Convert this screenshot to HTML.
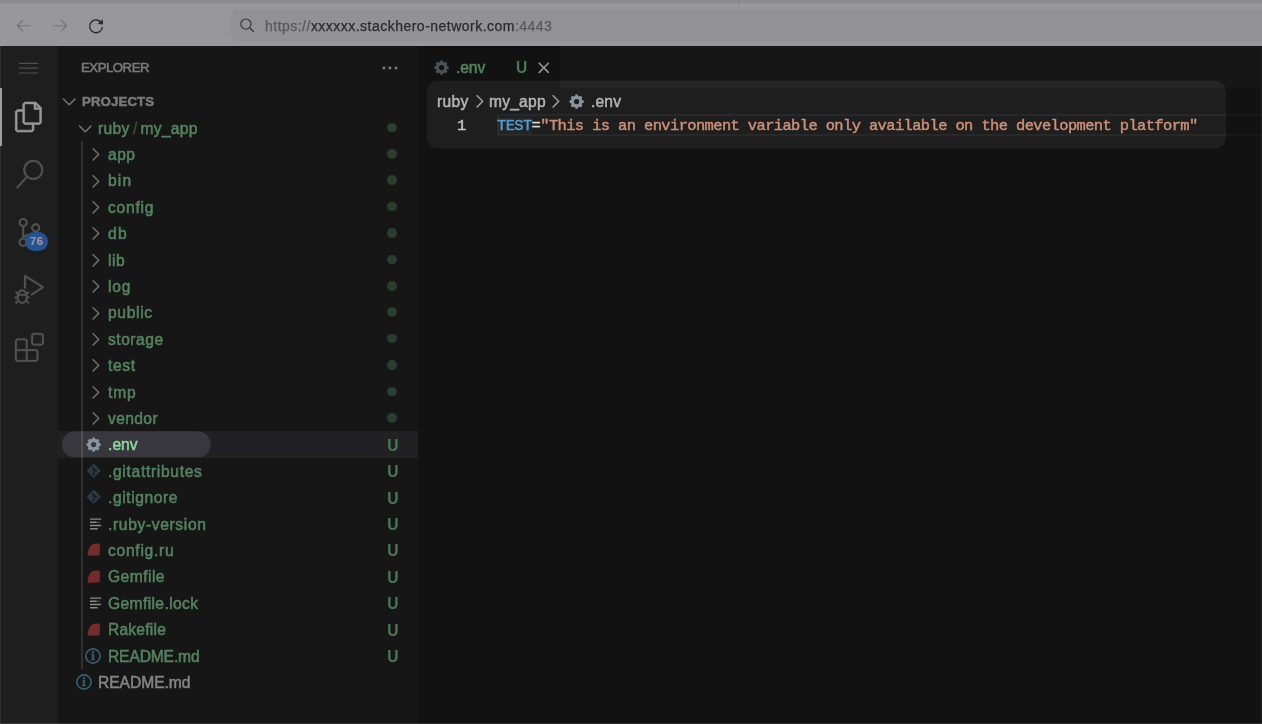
<!DOCTYPE html>
<html lang="en"><head><meta charset="utf-8"><title>.env - Visual Studio Code</title>
<style>
html,body{margin:0;padding:0;background:#121212;}
body{width:1262px;height:724px;overflow:hidden;position:relative;font-family:"Liberation Sans",sans-serif;}
.ic{position:absolute;display:block;overflow:visible}
.t,.u,.mono,#urltxt{will-change:transform;}
#chrome{position:absolute;left:0;top:0;width:1262px;height:46px;background:#98989a;}
#chrome .strip{position:absolute;left:0;top:0;width:1262px;height:4px;background:linear-gradient(#8b8b8e,#929295);border-bottom:1px solid #9c9c9e;}
#chrome .tick{position:absolute;left:738px;top:0;width:1px;height:4px;background:#7e7e82;}
#url{position:absolute;left:231px;top:9px;width:1045px;height:32px;border-radius:7px;background:#929294;}
#urltxt{position:absolute;left:264.8px;top:16.5px;font-size:14px;line-height:19px;white-space:nowrap;color:#59595b;-webkit-text-stroke:0.25px currentColor;}
#urltxt b{font-weight:normal;color:#2a2a2c;}
#vs{position:absolute;left:0;top:46px;width:1262px;height:678px;background:#1e1e1e;overflow:hidden;}
#act{position:absolute;left:0;top:0;width:57.6px;height:678px;background:#333333;}
#act .ind{position:absolute;left:0;top:42px;width:2.4px;height:57.6px;background:#ffffff;}
#side{position:absolute;left:57.6px;top:0;width:360px;height:678px;background:#252526;}
#tabs{position:absolute;left:417.6px;top:0;width:845px;height:42px;background:#252526;}
#tab{position:absolute;left:0;top:0;width:142.6px;height:42px;background:#1e1e1e;}
.t{position:absolute;white-space:nowrap;font-size:15.6px;line-height:26.4px;height:26.4px;margin-top:1.2px;-webkit-text-stroke:0.5px currentColor;}
.g{color:#8cd9a0;}
.row{position:absolute;left:0;width:360px;height:26.4px;}
.sel{background:#37373d;}
.dot{position:absolute;left:329.7px;top:8.3px;width:9.6px;height:9.6px;border-radius:50%;background:#7cc98a;opacity:.4;}
.u{position:absolute;left:322.6px;width:26px;text-align:center;top:1.6px;font-size:15.6px;font-weight:bold;line-height:26.4px;color:#78c990;}
.guide{position:absolute;left:23.5px;top:94.8px;width:1.9px;height:528px;background:#505050;}
#crumbs{position:absolute;left:417.6px;top:42px;width:845px;height:26.4px;background:#1e1e1e;color:rgba(204,204,204,.8);}
#code{position:absolute;left:417.6px;top:68.4px;width:845px;height:610px;}
.hl{position:absolute;left:79.4px;top:0;width:770px;height:17.6px;border:2px solid #282828;}
.mono{font-family:"Liberation Mono",monospace;font-size:15.4px;line-height:21.6px;letter-spacing:-0.586px;position:absolute;white-space:pre;top:1.5px;height:21.6px;-webkit-text-stroke:0.45px currentColor;}
#dim{position:absolute;left:0;top:0;}
</style></head><body>

<div id="chrome"><div class="strip"></div><div class="tick"></div><div id="url"></div>
<svg class="ic" style="left:14px;top:16px" width="20" height="20" viewBox="0 0 20 20"><path d="M16.8 9.7H3.6M9 4 3.4 9.7 9 15.4" fill="none" stroke="#737377" stroke-width="1.15"/></svg>
<svg class="ic" style="left:50px;top:16px" width="20" height="20" viewBox="0 0 20 20"><path d="M3.2 9.7H16.4M11 4 16.6 9.7 11 15.4" fill="none" stroke="#737377" stroke-width="1.15"/></svg>
<svg class="ic" style="left:86px;top:16.6px" width="20" height="20" viewBox="0 0 20 20"><path d="M15.6 6.2A6.4 6.4 0 1 0 16.4 10" fill="none" stroke="#2a2a2e" stroke-width="1.35"/><path d="M11.6 7.0 17.0 7.4 16.8 2.2Z" fill="#2a2a2e"/></svg>
<svg class="ic" style="left:239px;top:17px" width="17" height="17" viewBox="0 0 17 17"><circle cx="6.9" cy="7.1" r="5.1" fill="none" stroke="#36363a" stroke-width="1.15"/><path d="M10.5 10.7 14.8 14.9" stroke="#36363a" stroke-width="1.3"/></svg>
<div id="urltxt" style="letter-spacing:0.480px;"><span id="m_url">https://<b>xxxxxx.stackhero-network.com</b>:4443</span></div>
</div>
<div id="vs">
<div id="act"><div class="ind"></div>
<svg class="ic" style="left:19.2px;top:12.3px" width="19.2" height="19.2" viewBox="0 0 16 16" ><path fill="rgba(255,255,255,.4)" d="M16 5H0V4h16v1zm0 8H0v-1h16v1zm0-4.008H0V8h16v.992z"/></svg>
<svg class="ic" style="left:13.80px;top:56.20px" width="30.0" height="30.0" viewBox="0 0 24 24"><path fill="#ffffff" stroke="#ffffff" stroke-width="0.45" d="M17.5 0h-9L7 1.5V6H2.5L1 7.5v15.07L2.5 24h12.07L16 22.57V18h4.7l1.3-1.43V4.5L17.5 0zm0 2.12l2.38 2.38H17.5V2.12zm-3 20.38h-12v-15H7v9.07L8.5 18h6v4.5zm6-6h-12v-15H16V6h4.5v10.5z"/></svg>
<svg class="ic" style="left:14.80px;top:114.00px" width="28.8" height="28.8" viewBox="0 0 24 24"><path fill="rgba(255,255,255,.4)" stroke="rgba(255,255,255,.4)" stroke-width="0.25" d="M15.25 0a8.25 8.25 0 0 0-6.18 13.72L1 22.88l1.12 1 8.05-9.12A8.251 8.251 0 1 0 15.25.01V0zm0 15a6.75 6.75 0 1 1 0-13.5 6.75 6.75 0 0 1 0 13.5z"/></svg>
<svg class="ic" style="left:14.80px;top:171.60px" width="28.8" height="28.8" viewBox="0 0 24 24"><path fill="rgba(255,255,255,.4)" stroke="rgba(255,255,255,.4)" stroke-width="0.25" d="M21.007 8.222A3.738 3.738 0 0 0 15.045 5.2a3.737 3.737 0 0 0 1.156 6.583 2.988 2.988 0 0 1-2.668 1.67h-2.99a4.456 4.456 0 0 0-2.989 1.165V7.4a3.737 3.737 0 1 0-1.494 0v9.117a3.776 3.776 0 1 0 1.816.099 2.99 2.99 0 0 1 2.668-1.667h2.99a4.484 4.484 0 0 0 4.223-3.039 3.736 3.736 0 0 0 3.25-3.687zM4.565 3.738a2.242 2.242 0 1 1 4.484 0 2.242 2.242 0 0 1-4.484 0zm4.484 16.441a2.242 2.242 0 1 1-4.484 0 2.242 2.242 0 0 1 4.484 0zm8.221-9.715a2.242 2.242 0 1 1 0-4.485 2.242 2.242 0 0 1 0 4.485z"/></svg>
<svg class="ic" style="left:14.80px;top:229.20px" width="28.8" height="28.8" viewBox="0 0 24 24"><path fill="rgba(255,255,255,.4)" stroke="rgba(255,255,255,.4)" stroke-width="0.25" d="M10.94 13.5l-1.32 1.32a3.73 3.73 0 0 0-7.24 0L1.06 13.5 0 14.56l1.72 1.72-.22.22V18H0v1.5h1.5v.08c.077.489.214.966.41 1.42L0 22.94 1.06 24l1.65-1.65A4.308 4.308 0 0 0 6 24a4.31 4.31 0 0 0 3.29-1.65L10.94 24 12 22.94 10.09 21c.198-.464.336-.951.41-1.45v-.1H12V18h-1.5v-1.5l-.22-.22L12 14.56l-1.06-1.06zM6 13.5a2.25 2.25 0 0 1 2.25 2.25h-4.5A2.25 2.25 0 0 1 6 13.5zm3 6a3.33 3.33 0 0 1-3 3 3.33 3.33 0 0 1-3-3v-2.25h6v2.25zm14.76-9.9v1.26L13.5 17.37V15.6l8.5-5.37L9 2v9.46a5.07 5.07 0 0 0-1.5-.72V.63L8.64 0l15.12 9.6z"/></svg>
<svg class="ic" style="left:14.80px;top:286.80px" width="28.8" height="28.8" viewBox="0 0 24 24"><path fill="rgba(255,255,255,.4)" stroke="rgba(255,255,255,.4)" stroke-width="0.25" d="M13.5 1.5L15 0h7.5L24 1.5V9l-1.5 1.5H15L13.5 9V1.5zm1.5 0V9h7.5V1.5H15zM0 15V6l1.5-1.5H9L10.5 6v7.5H18l1.5 1.5v7.5L18 24H1.5L0 22.5V15zm9-1.5V6H1.5v7.5H9zM9 15H1.5v7.5H9V15zm1.5 7.5H18V15h-7.5v7.5z"/></svg>
<div style="position:absolute;left:24.6px;top:185.8px;width:23.6px;height:19.2px;border-radius:10px;background:#3f8af2;color:#fff;font-size:11.5px;letter-spacing:.4px;text-indent:.4px;font-weight:bold;line-height:19.2px;text-align:center;">76</div>
</div>
<div id="side">
<div class="t" style="left:23.6px;top:8.1px;font-size:13.2px;color:#cacaca;letter-spacing:-0.471px;"><span id="m_explorer">EXPLORER</span></div>
<svg class="ic" style="left:322.4px;top:17.5px" width="20" height="8" viewBox="0 0 20 8"><circle cx="3.9" cy="4" r="1.45" fill="#d0d0d0"/><circle cx="9.95" cy="4" r="1.45" fill="#d0d0d0"/><circle cx="16" cy="4" r="1.45" fill="#d0d0d0"/></svg>
<svg class="ic" style="left:1.60px;top:45.30px" width="20.6" height="20.6" viewBox="0 0 16 16"><path fill="#c5c5c5" stroke="#c5c5c5" stroke-width="0.3" d="M7.976 10.072l4.357-4.357.62.618L8.284 11h-.618L3 6.333l.619-.618 4.357 4.357z"/></svg>
<div class="t" style="left:24.8px;top:41.8px;font-size:13.2px;font-weight:bold;color:#cacaca;letter-spacing:0.143px;"><span id="m_projects">PROJECTS</span></div>
<div class="row" style="top:68.4px">
<svg class="ic" style="left:17.10px;top:3.30px" width="20.6" height="20.6" viewBox="0 0 16 16"><path fill="#c5c5c5" stroke="#c5c5c5" stroke-width="0.3" d="M7.976 10.072l4.357-4.357.62.618L8.284 11h-.618L3 6.333l.619-.618 4.357 4.357z"/></svg>
<div class="t g" style="left:40.5px;top:0"><span id="m_ruby" style="letter-spacing:0.300px;">ruby</span><span id="m_slash" style="opacity:.5;padding:0 3.35px">/</span><span id="m_myapp" style="letter-spacing:0.270px;">my_app</span></div>
<div class="dot"></div>
</div>
<div class="row" style="top:94.8px">
<svg class="ic" style="left:27.10px;top:3.40px" width="20.6" height="20.6" viewBox="0 0 16 16"><path fill="#c5c5c5" stroke="#c5c5c5" stroke-width="0.3" d="M10.072 8.024L5.715 3.667l.618-.62L11 7.716v.618L6.333 13l-.618-.619 4.357-4.357z"/></svg>
<div class="t g" style="left:50.1px;top:0;letter-spacing:0.500px;"><span id="m_app">app</span></div>
<div class="dot"></div>
</div>
<div class="row" style="top:121.2px">
<svg class="ic" style="left:27.10px;top:3.40px" width="20.6" height="20.6" viewBox="0 0 16 16"><path fill="#c5c5c5" stroke="#c5c5c5" stroke-width="0.3" d="M10.072 8.024L5.715 3.667l.618-.62L11 7.716v.618L6.333 13l-.618-.619 4.357-4.357z"/></svg>
<div class="t g" style="left:50.1px;top:0;letter-spacing:1.125px;"><span id="m_bin">bin</span></div>
<div class="dot"></div>
</div>
<div class="row" style="top:147.6px">
<svg class="ic" style="left:27.10px;top:3.40px" width="20.6" height="20.6" viewBox="0 0 16 16"><path fill="#c5c5c5" stroke="#c5c5c5" stroke-width="0.3" d="M10.072 8.024L5.715 3.667l.618-.62L11 7.716v.618L6.333 13l-.618-.619 4.357-4.357z"/></svg>
<div class="t g" style="left:50.1px;top:0;letter-spacing:0.770px;"><span id="m_config">config</span></div>
<div class="dot"></div>
</div>
<div class="row" style="top:174.0px">
<svg class="ic" style="left:27.10px;top:3.40px" width="20.6" height="20.6" viewBox="0 0 16 16"><path fill="#c5c5c5" stroke="#c5c5c5" stroke-width="0.3" d="M10.072 8.024L5.715 3.667l.618-.62L11 7.716v.618L6.333 13l-.618-.619 4.357-4.357z"/></svg>
<div class="t g" style="left:50.1px;top:0;letter-spacing:1.250px;"><span id="m_db">db</span></div>
<div class="dot"></div>
</div>
<div class="row" style="top:200.4px">
<svg class="ic" style="left:27.10px;top:3.40px" width="20.6" height="20.6" viewBox="0 0 16 16"><path fill="#c5c5c5" stroke="#c5c5c5" stroke-width="0.3" d="M10.072 8.024L5.715 3.667l.618-.62L11 7.716v.618L6.333 13l-.618-.619 4.357-4.357z"/></svg>
<div class="t g" style="left:50.1px;top:0;letter-spacing:0.500px;"><span id="m_lib">lib</span></div>
<div class="dot"></div>
</div>
<div class="row" style="top:226.8px">
<svg class="ic" style="left:27.10px;top:3.40px" width="20.6" height="20.6" viewBox="0 0 16 16"><path fill="#c5c5c5" stroke="#c5c5c5" stroke-width="0.3" d="M10.072 8.024L5.715 3.667l.618-.62L11 7.716v.618L6.333 13l-.618-.619 4.357-4.357z"/></svg>
<div class="t g" style="left:50.1px;top:0;letter-spacing:0.850px;"><span id="m_log">log</span></div>
<div class="dot"></div>
</div>
<div class="row" style="top:253.2px">
<svg class="ic" style="left:27.10px;top:3.40px" width="20.6" height="20.6" viewBox="0 0 16 16"><path fill="#c5c5c5" stroke="#c5c5c5" stroke-width="0.3" d="M10.072 8.024L5.715 3.667l.618-.62L11 7.716v.618L6.333 13l-.618-.619 4.357-4.357z"/></svg>
<div class="t g" style="left:50.1px;top:0;letter-spacing:0.680px;"><span id="m_public">public</span></div>
<div class="dot"></div>
</div>
<div class="row" style="top:279.6px">
<svg class="ic" style="left:27.10px;top:3.40px" width="20.6" height="20.6" viewBox="0 0 16 16"><path fill="#c5c5c5" stroke="#c5c5c5" stroke-width="0.3" d="M10.072 8.024L5.715 3.667l.618-.62L11 7.716v.618L6.333 13l-.618-.619 4.357-4.357z"/></svg>
<div class="t g" style="left:50.1px;top:0;letter-spacing:0.517px;"><span id="m_storage">storage</span></div>
<div class="dot"></div>
</div>
<div class="row" style="top:306.0px">
<svg class="ic" style="left:27.10px;top:3.40px" width="20.6" height="20.6" viewBox="0 0 16 16"><path fill="#c5c5c5" stroke="#c5c5c5" stroke-width="0.3" d="M10.072 8.024L5.715 3.667l.618-.62L11 7.716v.618L6.333 13l-.618-.619 4.357-4.357z"/></svg>
<div class="t g" style="left:50.1px;top:0;letter-spacing:0.650px;"><span id="m_test">test</span></div>
<div class="dot"></div>
</div>
<div class="row" style="top:332.4px">
<svg class="ic" style="left:27.10px;top:3.40px" width="20.6" height="20.6" viewBox="0 0 16 16"><path fill="#c5c5c5" stroke="#c5c5c5" stroke-width="0.3" d="M10.072 8.024L5.715 3.667l.618-.62L11 7.716v.618L6.333 13l-.618-.619 4.357-4.357z"/></svg>
<div class="t g" style="left:50.1px;top:0;letter-spacing:0.875px;"><span id="m_tmp">tmp</span></div>
<div class="dot"></div>
</div>
<div class="row" style="top:358.8px">
<svg class="ic" style="left:27.10px;top:3.40px" width="20.6" height="20.6" viewBox="0 0 16 16"><path fill="#c5c5c5" stroke="#c5c5c5" stroke-width="0.3" d="M10.072 8.024L5.715 3.667l.618-.62L11 7.716v.618L6.333 13l-.618-.619 4.357-4.357z"/></svg>
<div class="t g" style="left:50.1px;top:0;letter-spacing:0.380px;"><span id="m_vendor">vendor</span></div>
<div class="dot"></div>
</div>
<div class="row sel" style="top:385.2px">
<svg class="ic" style="left:28.30px;top:5.50px" width="15.2" height="15.2" viewBox="0 0 16 16"><path fill="#8895a0" fill-rule="evenodd" d="M14.01 6.46 L15.48 6.63 L15.48 9.37 L14.01 9.54 L13.34 11.16 L14.25 12.32 L12.32 14.25 L11.16 13.34 L9.54 14.01 L9.37 15.48 L6.63 15.48 L6.46 14.01 L4.84 13.34 L3.68 14.25 L1.75 12.32 L2.66 11.16 L1.99 9.54 L0.52 9.37 L0.52 6.63 L1.99 6.46 L2.66 4.84 L1.75 3.68 L3.68 1.75 L4.84 2.66 L6.46 1.99 L6.63 0.52 L9.37 0.52 L9.54 1.99 L11.16 2.66 L12.32 1.75 L14.25 3.68 L13.34 4.84Z M10.75 8.00 A2.75 2.75 0 1 0 5.25 8.00 A2.75 2.75 0 1 0 10.75 8.00Z"/></svg>
<div class="t g" style="left:50.1px;top:0;letter-spacing:0.050px;"><span id="m_env">.env</span></div>
<div class="u">U</div>
</div>
<div class="row" style="top:411.6px">
<svg class="ic" style="left:26.95px;top:4.45px" width="17.5" height="17.5" viewBox="0 0 16 16"><rect x="3.3" y="3.3" width="9.4" height="9.4" rx="1.1" transform="rotate(45 8 8)" fill="#48606f"/><path d="M6.2 4.4 L9.7 7.9 M7.9 6.1 V11.2" stroke="#252526" stroke-width="0.9" fill="none"/><circle cx="7.9" cy="11.2" r="0.95" fill="#252526"/><circle cx="9.9" cy="8.1" r="0.95" fill="#252526"/><circle cx="7.9" cy="6.1" r="0.8" fill="#252526"/></svg>
<div class="t g" style="left:50.1px;top:0;letter-spacing:0.681px;"><span id="m_gitattr">.gitattributes</span></div>
<div class="u">U</div>
</div>
<div class="row" style="top:438.0px">
<svg class="ic" style="left:26.95px;top:4.45px" width="17.5" height="17.5" viewBox="0 0 16 16"><rect x="3.3" y="3.3" width="9.4" height="9.4" rx="1.1" transform="rotate(45 8 8)" fill="#48606f"/><path d="M6.2 4.4 L9.7 7.9 M7.9 6.1 V11.2" stroke="#252526" stroke-width="0.9" fill="none"/><circle cx="7.9" cy="11.2" r="0.95" fill="#252526"/><circle cx="9.9" cy="8.1" r="0.95" fill="#252526"/><circle cx="7.9" cy="6.1" r="0.8" fill="#252526"/></svg>
<div class="t g" style="left:50.1px;top:0;letter-spacing:0.583px;"><span id="m_gitign">.gitignore</span></div>
<div class="u">U</div>
</div>
<div class="row" style="top:464.4px">
<svg class="ic" style="left:30.70px;top:6.20px" width="14" height="14" viewBox="0 0 14 14"><path stroke="#e4e6e6" stroke-width="1.4" fill="none" d="M2.0 2.1H13.1M2.0 5.3H8.6M2.0 8.5H13.1M2.0 11.7H9.7"/><path stroke="#e4e6e6" stroke-opacity=".45" stroke-width="1.4" fill="none" d="M8.6 5.3H11.8"/></svg>
<div class="t g" style="left:50.1px;top:0;letter-spacing:0.650px;"><span id="m_rubyver">.ruby-version</span></div>
<div class="u">U</div>
</div>
<div class="row" style="top:490.8px">
<svg class="ic" style="left:29.00px;top:6.50px" width="13.6" height="13.2" viewBox="0 0 14 14"><path fill="#c24848" d="M1.5 13.5 Q0.3 13.5 0.45 12.2 C0.9 6.2 3.2 0.9 9.6 0.6 L12.1 0.6 Q13.6 0.6 13.55 2.1 L13.3 11.9 Q13.3 13.3 11.9 13.35 Z"/></svg>
<div class="t g" style="left:50.1px;top:0;letter-spacing:0.731px;"><span id="m_configru">config.ru</span></div>
<div class="u">U</div>
</div>
<div class="row" style="top:517.2px">
<svg class="ic" style="left:29.00px;top:6.50px" width="13.6" height="13.2" viewBox="0 0 14 14"><path fill="#c24848" d="M1.5 13.5 Q0.3 13.5 0.45 12.2 C0.9 6.2 3.2 0.9 9.6 0.6 L12.1 0.6 Q13.6 0.6 13.55 2.1 L13.3 11.9 Q13.3 13.3 11.9 13.35 Z"/></svg>
<div class="t g" style="left:50.1px;top:0;letter-spacing:0.458px;"><span id="m_gemfile">Gemfile</span></div>
<div class="u">U</div>
</div>
<div class="row" style="top:543.6px">
<svg class="ic" style="left:30.70px;top:6.20px" width="14" height="14" viewBox="0 0 14 14"><path stroke="#e4e6e6" stroke-width="1.4" fill="none" d="M2.0 2.1H13.1M2.0 5.3H8.6M2.0 8.5H13.1M2.0 11.7H9.7"/><path stroke="#e4e6e6" stroke-opacity=".45" stroke-width="1.4" fill="none" d="M8.6 5.3H11.8"/></svg>
<div class="t g" style="left:50.1px;top:0;letter-spacing:0.386px;"><span id="m_gemlock">Gemfile.lock</span></div>
<div class="u">U</div>
</div>
<div class="row" style="top:570.0px">
<svg class="ic" style="left:29.00px;top:6.50px" width="13.6" height="13.2" viewBox="0 0 14 14"><path fill="#c24848" d="M1.5 13.5 Q0.3 13.5 0.45 12.2 C0.9 6.2 3.2 0.9 9.6 0.6 L12.1 0.6 Q13.6 0.6 13.55 2.1 L13.3 11.9 Q13.3 13.3 11.9 13.35 Z"/></svg>
<div class="t g" style="left:50.1px;top:0;letter-spacing:0.214px;"><span id="m_rakefile">Rakefile</span></div>
<div class="u">U</div>
</div>
<div class="row" style="top:596.4px">
<svg class="ic" style="left:26.70px;top:4.20px" width="18" height="18" viewBox="0 0 18 18"><circle cx="9" cy="9" r="7.1" fill="none" stroke="#5b9abd" stroke-width="1.7"/><text x="9" y="13.3" text-anchor="middle" font-family="Liberation Serif, serif" font-weight="bold" font-size="12" fill="#5b9abd" stroke="#5b9abd" stroke-width="0.6">i</text></svg>
<div class="t g" style="left:50.1px;top:0;letter-spacing:-0.138px;"><span id="m_readme1">README.md</span></div>
<div class="u">U</div>
</div>
<div class="row" style="top:622.8px">
<svg class="ic" style="left:17.20px;top:4.20px" width="18" height="18" viewBox="0 0 18 18"><circle cx="9" cy="9" r="7.1" fill="none" stroke="#5b9abd" stroke-width="1.7"/><text x="9" y="13.3" text-anchor="middle" font-family="Liberation Serif, serif" font-weight="bold" font-size="12" fill="#5b9abd" stroke="#5b9abd" stroke-width="0.6">i</text></svg>
<div class="t " style="left:40.2px;top:0;color:#dcdcdc;letter-spacing:-0.037px;"><span id="m_readme2">README.md</span></div>
</div>
<div class="guide"></div>
</div>
<div id="tabs"><div id="tab">
<svg class="ic" style="left:16.10px;top:13.60px" width="15.2" height="15.2" viewBox="0 0 16 16"><path fill="#7a8791" fill-rule="evenodd" d="M14.01 6.46 L15.48 6.63 L15.48 9.37 L14.01 9.54 L13.34 11.16 L14.25 12.32 L12.32 14.25 L11.16 13.34 L9.54 14.01 L9.37 15.48 L6.63 15.48 L6.46 14.01 L4.84 13.34 L3.68 14.25 L1.75 12.32 L2.66 11.16 L1.99 9.54 L0.52 9.37 L0.52 6.63 L1.99 6.46 L2.66 4.84 L1.75 3.68 L3.68 1.75 L4.84 2.66 L6.46 1.99 L6.63 0.52 L9.37 0.52 L9.54 1.99 L11.16 2.66 L12.32 1.75 L14.25 3.68 L13.34 4.84Z M10.75 8.00 A2.75 2.75 0 1 0 5.25 8.00 A2.75 2.75 0 1 0 10.75 8.00Z"/></svg>
<div class="t g" style="left:38.6px;top:7.8px;letter-spacing:-0.083px;"><span id="m_tabenv">.env</span></div>
<div class="t g" style="left:98.8px;top:8.3px;font-size:15.6px;color:#78c990;font-weight:bold;-webkit-text-stroke:0;">U</div>
<svg class="ic" style="left:116.50px;top:11.70px" width="19.6" height="19.6" viewBox="0 0 16 16"><path fill="#ffffff" stroke="#ffffff" stroke-width="0.4" d="M8 8.707l3.646 3.647.708-.707L8.707 8l3.647-3.646-.707-.708L8 7.293 4.354 3.646l-.707.708L7.293 8l-3.646 3.646.707.708L8 8.707z"/></svg>
</div></div>
<div id="crumbs">
<div class="t" style="left:19.0px;top:-0.3px;letter-spacing:0.333px;"><span id="m_bc_ruby">ruby</span></div>
<svg class="ic" style="left:51.50px;top:3.30px" width="20.6" height="20.6" viewBox="0 0 16 16"><path fill="#a8a8a8" stroke="#a8a8a8" stroke-width="0.3" d="M10.072 8.024L5.715 3.667l.618-.62L11 7.716v.618L6.333 13l-.618-.619 4.357-4.357z"/></svg>
<div class="t" style="left:71.0px;top:-0.3px;letter-spacing:0.220px;"><span id="m_bc_myapp">my_app</span></div>
<svg class="ic" style="left:127.50px;top:3.30px" width="20.6" height="20.6" viewBox="0 0 16 16"><path fill="#a8a8a8" stroke="#a8a8a8" stroke-width="0.3" d="M10.072 8.024L5.715 3.667l.618-.62L11 7.716v.618L6.333 13l-.618-.619 4.357-4.357z"/></svg>
<svg class="ic" style="left:151.30px;top:5.60px" width="15.2" height="15.2" viewBox="0 0 16 16"><path fill="#8895a0" fill-rule="evenodd" d="M14.01 6.46 L15.48 6.63 L15.48 9.37 L14.01 9.54 L13.34 11.16 L14.25 12.32 L12.32 14.25 L11.16 13.34 L9.54 14.01 L9.37 15.48 L6.63 15.48 L6.46 14.01 L4.84 13.34 L3.68 14.25 L1.75 12.32 L2.66 11.16 L1.99 9.54 L0.52 9.37 L0.52 6.63 L1.99 6.46 L2.66 4.84 L1.75 3.68 L3.68 1.75 L4.84 2.66 L6.46 1.99 L6.63 0.52 L9.37 0.52 L9.54 1.99 L11.16 2.66 L12.32 1.75 L14.25 3.68 L13.34 4.84Z M10.75 8.00 A2.75 2.75 0 1 0 5.25 8.00 A2.75 2.75 0 1 0 10.75 8.00Z"/></svg>
<div class="t" style="left:173.6px;top:-0.3px;letter-spacing:0.150px;"><span id="m_bc_env">.env</span></div>
</div>
<div id="code"><div class="hl"></div>
<div class="mono" style="left:39.6px;color:#c6c6c6;">1</div>
<div class="mono" style="left:79.4px;"><span id="m_code"><span style="color:#569cd6;background:rgba(87,87,87,.12)">TEST</span><span style="color:#d4d4d4">=</span><span style="color:#ce9178">"This is an environment variable only available on the development platform"</span></span></div>
</div>
<svg id="dim" width="1262" height="678" viewBox="0 0 1262 678"><path fill="rgba(0,0,0,.4)" fill-rule="evenodd" d="M0 0H1262V678H0ZM437.4 34.8H1215.6A10.5 10.5 0 0 1 1226.1 45.3V91.89999999999999A10.5 10.5 0 0 1 1215.6 102.39999999999999H437.4A10.5 10.5 0 0 1 426.9 91.89999999999999V45.3A10.5 10.5 0 0 1 437.4 34.8ZM75.2 385.2H197.5A13.2 13.2 0 0 1 210.7 398.4V398.4A13.2 13.2 0 0 1 197.5 411.59999999999997H75.2A13.2 13.2 0 0 1 62 398.4V398.4A13.2 13.2 0 0 1 75.2 385.2Z"/></svg>
<div style="position:absolute;left:0;top:677px;width:1262px;height:1px;background:rgba(255,255,255,.1)"></div><div style="position:absolute;left:0;top:0;width:1px;height:678px;background:rgba(255,255,255,.08)"></div><div style="position:absolute;left:1261px;top:0;width:1px;height:678px;background:rgba(255,255,255,.06)"></div>
</div></body></html>
